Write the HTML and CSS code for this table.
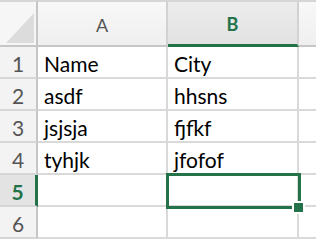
FILE: index.html
```html
<!DOCTYPE html>
<html lang="en">

<head>
    <meta charset="UTF-8">
    <meta name="viewport" content="width=device-width, initial-scale=1.0">
    <title>Sheet1</title>
    <link rel="stylesheet" href="styles.css">
</head>

<body>
    <div class="sheet">
        <!-- header row -->
        <div class="corner"><span class="tri"></span></div>
        <div class="colhead">A</div>
        <div class="colhead sel">B</div>
        <div class="colhead last"></div>

        <div class="rowhead">1</div>
        <div class="cell">Name</div>
        <div class="cell">City</div>
        <div class="cell last"></div>

        <div class="rowhead">2</div>
        <div class="cell">asdf</div>
        <div class="cell">hhsns</div>
        <div class="cell last"></div>

        <div class="rowhead">3</div>
        <div class="cell">jsjsja</div>
        <div class="cell">fjfkf</div>
        <div class="cell last"></div>

        <div class="rowhead">4</div>
        <div class="cell">tyhjk</div>
        <div class="cell">jfofof</div>
        <div class="cell last"></div>

        <div class="rowhead sel">5</div>
        <div class="cell"></div>
        <div class="cell active">
            <div class="selbox"><span class="handle"></span></div>
        </div>
        <div class="cell last"></div>

        <div class="rowhead">6</div>
        <div class="cell"></div>
        <div class="cell"></div>
        <div class="cell last"></div>
    </div>
</body>

</html>
```

FILE: styles.css
```css
* {
    margin: 0;
    padding: 0;
    box-sizing: border-box;
}

body {
    width: 316px;
    height: 240px;
    overflow: hidden;
    background: #fff;
    font-family: 'Lato', 'Liberation Sans', sans-serif;
}

.sheet {
    display: grid;
    grid-template-columns: 38px 130px 131px 1fr;
    grid-template-rows: 47px repeat(6, 32px);
    width: 316px;
}

.corner {
    position: relative;
    background: #f6f6f6;
    border-top: 2px solid #d6d6d6;
    border-right: 2px solid #c6c6c6;
    border-bottom: 2px solid #c6c6c6;
}

/* the little "select all" triangle */
.tri {
    position: absolute;
    left: 6px;
    top: 11px;
    width: 28px;
    height: 30px;
    background: #dcdcdc;
    clip-path: polygon(100% 0, 100% 100%, 0 100%);
}

.colhead {
    background: linear-gradient(#f8f8f8, #efefef);
    border-top: 2px solid #d6d6d6;
    border-right: 2px solid #d2d2d2;
    border-bottom: 2px solid #c6c6c6;
    color: #555;
    font-size: 18px;
    text-align: center;
    padding-top: 13px;
    line-height: 20px;
}

.colhead.sel {
    background: linear-gradient(#ececec, #e2e2e2);
    border-bottom: 3px solid #237249;
    color: #237249;
    font-weight: bold;
    padding-top: 12px;
}

.rowhead {
    background: #f3f3f3;
    border-right: 2px solid #c6c6c6;
    border-bottom: 2px solid #d6d6d6;
    color: #555;
    font-size: 21px;
    text-align: center;
    padding-top: 4px;
    line-height: 26px;
}

.rowhead.sel {
    background: #e3e3e3;
    border-right: 3px solid #237249;
    color: #237249;
    font-weight: bold;
}

.cell {
    border-right: 2px solid #d9d9d9;
    border-bottom: 2px solid #d9d9d9;
    font-size: 21px;
    color: #000;
    padding: 4px 0 0 6px;
    line-height: 26px;
    white-space: nowrap;
}

.last {
    border-right: none;
}

.cell.active {
    position: relative;
}

.selbox {
    position: absolute;
    left: -2px;
    top: -2px;
    width: 135px;
    height: 36px;
    border: 3px solid #237249;
}

.handle {
    position: absolute;
    left: 123px;
    top: 25px;
    width: 13px;
    height: 13px;
    background: #237249;
    border: 2px solid #fff;
}
```
